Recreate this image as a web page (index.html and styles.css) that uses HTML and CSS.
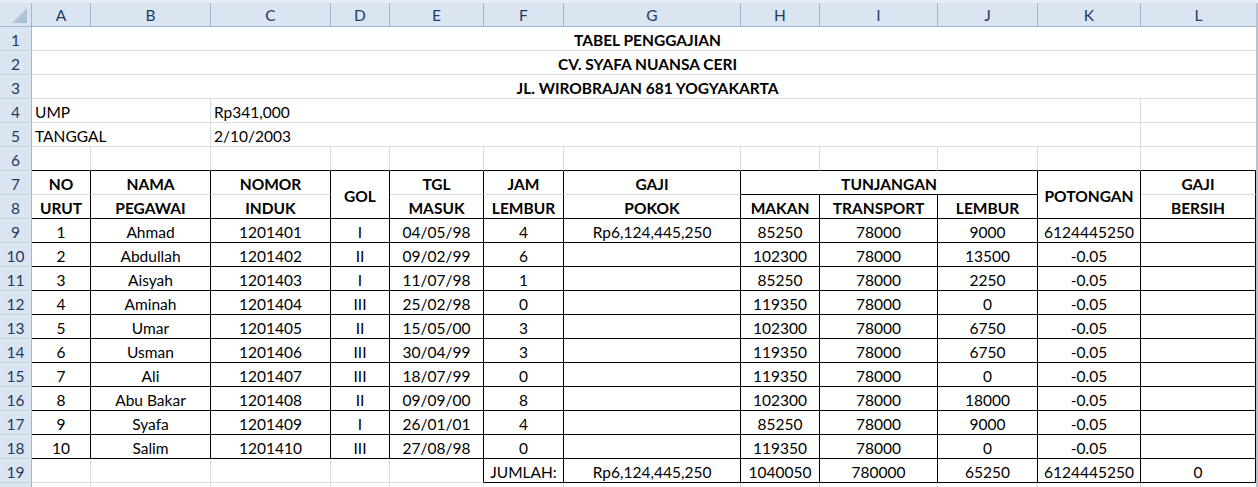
FILE: index.html
```html
<!DOCTYPE html>
<html>
<head>
<meta charset="utf-8">
<link rel="stylesheet" href="styles.css">
</head>
<body>
<div class="band"></div>
<div class="sheet">
  <div class="corner"><span class="tri"></span></div>
  <div class="ch">A</div><div class="ch">B</div><div class="ch">C</div><div class="ch">D</div><div class="ch">E</div><div class="ch">F</div><div class="ch">G</div><div class="ch">H</div><div class="ch">I</div><div class="ch">J</div><div class="ch">K</div><div class="ch last">L</div>

  <div class="rh">1</div><div class="c b s12 edge title">TABEL PENGGAJIAN</div>
  <div class="rh">2</div><div class="c b s12 edge title">CV. SYAFA NUANSA CERI</div>
  <div class="rh">3</div><div class="c b s12 edge title">JL. WIROBRAJAN 681 YOGYAKARTA</div>

  <div class="rh">4</div><div class="c l s2">UMP</div><div class="c l s9">Rp341,000</div><div class="c edge"></div>
  <div class="rh">5</div><div class="c l s2">TANGGAL</div><div class="c l s9">2/10/2003</div><div class="c edge"></div>

  <div class="rh">6</div><div class="c kb"></div><div class="c kb"></div><div class="c kb"></div><div class="c kb"></div><div class="c kb"></div><div class="c kb"></div><div class="c kb"></div><div class="c kb"></div><div class="c kb"></div><div class="c kb"></div><div class="c kb"></div><div class="c kb edge"></div>

  <div class="rh">7</div>
  <div class="c b kr">NO</div>
  <div class="c b kr">NAMA</div>
  <div class="c b kr">NOMOR</div>
  <div class="c b kr kb r2">GOL</div>
  <div class="c b kr">TGL</div>
  <div class="c b kr">JAM</div>
  <div class="c b kr">GAJI</div>
  <div class="c b kr kb s3">TUNJANGAN</div>
  <div class="c b kr kb r2">POTONGAN</div>
  <div class="c b kr">GAJI</div>

  <div class="rh">8</div>
  <div class="c b kr kb">URUT</div>
  <div class="c b kr kb">PEGAWAI</div>
  <div class="c b kr kb">INDUK</div>
  <div class="c b kr kb">MASUK</div>
  <div class="c b kr kb">LEMBUR</div>
  <div class="c b kr kb">POKOK</div>
  <div class="c b kr kb">MAKAN</div>
  <div class="c b kr kb">TRANSPORT</div>
  <div class="c b kr kb">LEMBUR</div>
  <div class="c b kr kb">BERSIH</div>

  <div class="rh">9</div><div class="c k">1</div><div class="c k">Ahmad</div><div class="c k">1201401</div><div class="c k">I</div><div class="c k">04/05/98</div><div class="c k">4</div><div class="c k">Rp6,124,445,250</div><div class="c k">85250</div><div class="c k">78000</div><div class="c k">9000</div><div class="c k">6124445250</div><div class="c k"></div>
  <div class="rh">10</div><div class="c k">2</div><div class="c k">Abdullah</div><div class="c k">1201402</div><div class="c k">II</div><div class="c k">09/02/99</div><div class="c k">6</div><div class="c k"></div><div class="c k">102300</div><div class="c k">78000</div><div class="c k">13500</div><div class="c k">-0.05</div><div class="c k"></div>
  <div class="rh">11</div><div class="c k">3</div><div class="c k">Aisyah</div><div class="c k">1201403</div><div class="c k">I</div><div class="c k">11/07/98</div><div class="c k">1</div><div class="c k"></div><div class="c k">85250</div><div class="c k">78000</div><div class="c k">2250</div><div class="c k">-0.05</div><div class="c k"></div>
  <div class="rh">12</div><div class="c k">4</div><div class="c k">Aminah</div><div class="c k">1201404</div><div class="c k">III</div><div class="c k">25/02/98</div><div class="c k">0</div><div class="c k"></div><div class="c k">119350</div><div class="c k">78000</div><div class="c k">0</div><div class="c k">-0.05</div><div class="c k"></div>
  <div class="rh">13</div><div class="c k">5</div><div class="c k">Umar</div><div class="c k">1201405</div><div class="c k">II</div><div class="c k">15/05/00</div><div class="c k">3</div><div class="c k"></div><div class="c k">102300</div><div class="c k">78000</div><div class="c k">6750</div><div class="c k">-0.05</div><div class="c k"></div>
  <div class="rh">14</div><div class="c k">6</div><div class="c k">Usman</div><div class="c k">1201406</div><div class="c k">III</div><div class="c k">30/04/99</div><div class="c k">3</div><div class="c k"></div><div class="c k">119350</div><div class="c k">78000</div><div class="c k">6750</div><div class="c k">-0.05</div><div class="c k"></div>
  <div class="rh">15</div><div class="c k">7</div><div class="c k">Ali</div><div class="c k">1201407</div><div class="c k">III</div><div class="c k">18/07/99</div><div class="c k">0</div><div class="c k"></div><div class="c k">119350</div><div class="c k">78000</div><div class="c k">0</div><div class="c k">-0.05</div><div class="c k"></div>
  <div class="rh">16</div><div class="c k">8</div><div class="c k">Abu Bakar</div><div class="c k">1201408</div><div class="c k">II</div><div class="c k">09/09/00</div><div class="c k">8</div><div class="c k"></div><div class="c k">102300</div><div class="c k">78000</div><div class="c k">18000</div><div class="c k">-0.05</div><div class="c k"></div>
  <div class="rh">17</div><div class="c k">9</div><div class="c k">Syafa</div><div class="c k">1201409</div><div class="c k">I</div><div class="c k">26/01/01</div><div class="c k">4</div><div class="c k"></div><div class="c k">85250</div><div class="c k">78000</div><div class="c k">9000</div><div class="c k">-0.05</div><div class="c k"></div>
  <div class="rh">18</div><div class="c k">10</div><div class="c k">Salim</div><div class="c k">1201410</div><div class="c k">III</div><div class="c k">27/08/98</div><div class="c k">0</div><div class="c k"></div><div class="c k">119350</div><div class="c k">78000</div><div class="c k">0</div><div class="c k">-0.05</div><div class="c k"></div>

  <div class="rh">19</div><div class="c"></div><div class="c"></div><div class="c"></div><div class="c"></div><div class="c kr"></div><div class="c k">JUMLAH:</div><div class="c k">Rp6,124,445,250</div><div class="c k">1040050</div><div class="c k">780000</div><div class="c k">65250</div><div class="c k">6124445250</div><div class="c k">0</div>

  <div class="rh"></div><div class="c"></div><div class="c"></div><div class="c"></div><div class="c"></div><div class="c"></div><div class="c"></div><div class="c"></div><div class="c"></div><div class="c"></div><div class="c"></div><div class="c"></div><div class="c edge"></div>
</div>
</body>
</html>
```

FILE: styles.css
```css
html, body {
  margin: 0;
  padding: 0;
  overflow: hidden;
  background: #ffffff;
}

body {
  font-family: Lato, "Open Sans", "Liberation Sans", sans-serif;
  font-size: 15.5px;
  color: #000000;
}

.band {
  height: 3px;
  background: #e6edf6;
}

.sheet {
  display: grid;
  grid-template-columns: 32px 59px 120px 120px 59px 94px 80px 177px 79px 118px 100px 103px 115px;
  grid-auto-rows: 24px;
  width: 1256px;
  border-right: 2px solid #b9c4d2;
}

.corner {
  position: relative;
  background: #dbe5f1;
  border-right: 1px solid #9eb6ce;
  border-bottom: 1px solid #9eb6ce;
  box-sizing: border-box;
}

.tri {
  position: absolute;
  right: 4px;
  bottom: 3px;
  width: 15px;
  height: 15px;
  background: linear-gradient(135deg, #c3d0e0, #a9bbd2);
  clip-path: polygon(100% 0, 100% 100%, 0 100%);
}

.ch {
  background: #dbe5f1;
  color: #1f3b63;
  border-right: 1px solid #9eb6ce;
  border-bottom: 1px solid #9eb6ce;
  box-sizing: border-box;
  display: flex;
  align-items: center;
  justify-content: center;
  padding-top: 1px;
}

.ch.last {
  border-right: none;
}

.rh {
  background: #dbe5f1;
  color: #1f3b63;
  border-right: 1px solid #9eb6ce;
  border-bottom: 1px solid #c5d2e3;
  box-sizing: border-box;
  display: flex;
  align-items: center;
  justify-content: center;
  padding-top: 2px;
}

.c {
  border-right: 1px solid #dadcdd;
  border-bottom: 1px solid #dadcdd;
  box-sizing: border-box;
  display: flex;
  align-items: center;
  justify-content: center;
  padding: 2px 3px 0 3px;
  white-space: nowrap;
  overflow: hidden;
}

.title { padding-left: 10px; }

.l { justify-content: flex-start; }
.b { font-weight: bold; }

.s2 { grid-column: span 2; }
.s3 { grid-column: span 3; }
.s9 { grid-column: span 9; }
.s12 { grid-column: span 12; }
.r2 { grid-row: span 2; }

.edge { border-right: none; }

.k { border-right-color: #000000; border-bottom-color: #000000; }
.kr { border-right-color: #000000; }
.kb { border-bottom-color: #000000; }
```
